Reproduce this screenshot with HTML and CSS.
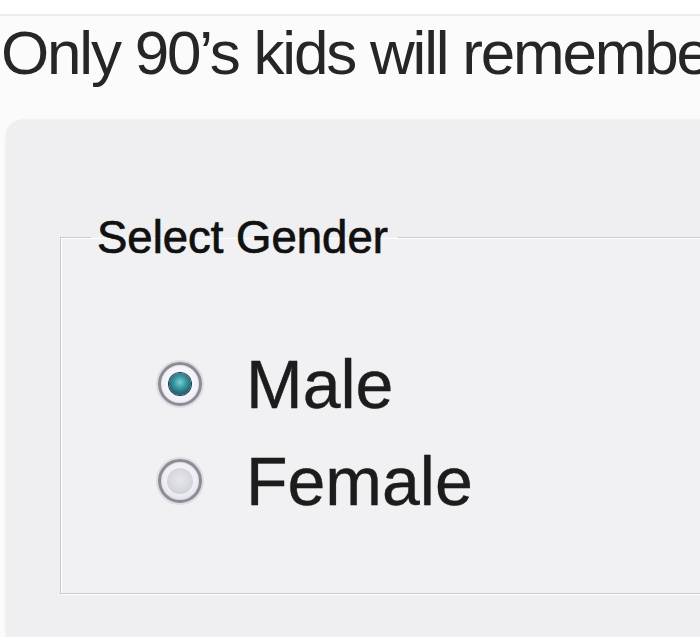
FILE: index.html
```html
<!DOCTYPE html>
<html lang="en">
<head>
<meta charset="utf-8">
<title>Only 90's kids will remember</title>
<link rel="stylesheet" href="styles.css">
</head>
<body>
<div class="page">
  <div class="topbar"></div>
  <h1 class="caption">Only 90’s kids will remember</h1>
  <div class="panel">
    <fieldset class="group">
      <legend class="legend">Select Gender</legend>
      <div class="options">
        <label class="option">
          <span class="radio checked"><span class="dot"></span></span>
          <span class="label-text">Male</span>
        </label>
        <label class="option">
          <span class="radio"><span class="dot"></span></span>
          <span class="label-text">Female</span>
        </label>
      </div>
    </fieldset>
  </div>
</div>
</body>
</html>
```

FILE: styles.css
```css
html, body {
  margin: 0;
  padding: 0;
  background: #fbfbfb;
}

.page {
  width: 700px;
  height: 637px;
  overflow: hidden;
  display: flex;
  flex-direction: column;
}

.topbar {
  height: 14px;
  background: #ffffff;
  border-bottom: 2px solid #ececec;
  flex: none;
}

.caption {
  margin: 6px 0 0 1px;
  font-family: "Liberation Sans", Arial, sans-serif;
  font-weight: normal;
  font-size: 62px;
  line-height: 1;
  letter-spacing: -2.2px;
  color: #262626;
  white-space: nowrap;
  flex: none;
}

.panel {
  margin: 36px 0 0 6px;
  width: 820px;
  flex: 1;
  background: #efeff1;
  border-radius: 18px 0 0 0;
  box-shadow: 0 -1px 2px rgba(0,0,0,0.04), -1px 0 2px rgba(0,0,0,0.04);
  padding: 95px 0 0 54px;
  box-sizing: border-box;
}

.group {
  margin: 0;
  padding: 89px 0 78px 0;
  border: 1px solid #c9c9ce;
  box-shadow: 1px 1px 0 #ffffff, inset 1px 1px 0 #ffffff;
  background: #f1f1f4;
  min-width: 0;
}

.legend {
  margin-left: 30px;
  padding: 0 10px 0 6px;
  font-family: "Liberation Sans", Arial, sans-serif;
  font-size: 45.5px;
  line-height: 1;
  color: #111111;
  -webkit-text-stroke: 0.6px #111111;
  text-shadow: 0 0 1px rgba(0,0,0,0.5);
}

.options {
  display: flex;
  flex-direction: column;
  gap: 29px;
  padding-left: 97px;
}

.option {
  display: flex;
  align-items: center;
  gap: 44px;
}

.label-text {
  font-family: "Liberation Sans", Arial, sans-serif;
  font-size: 68px;
  line-height: 1;
  color: #1c1c1c;
  -webkit-text-stroke: 0.3px #1c1c1c;
  text-shadow: 0 0 1px rgba(0,0,0,0.35);
}

.radio {
  width: 38px;
  height: 38px;
  border-radius: 50%;
  border: 3px solid #8c8c92;
  box-shadow: 0 0 0 2px #dcdce4, inset 0 0 2px rgba(0,0,0,0.15);
  background: radial-gradient(circle at 50% 40%, #fbfbff 0%, #ececf2 60%, #d6d6de 100%);
  display: flex;
  align-items: center;
  justify-content: center;
  flex: none;
}

.radio .dot {
  width: 26px;
  height: 26px;
  border-radius: 50%;
  background: radial-gradient(circle at 50% 45%, #e6e6ec 0%, #d6d6de 60%, #c0c0c9 100%);
}

.radio.checked {
  background: radial-gradient(circle at 50% 45%, #ffffff 0%, #f0f0f8 70%, #d8d8e2 100%);
}

.radio.checked .dot {
  width: 22px;
  height: 22px;
  background: radial-gradient(circle at 50% 42%, #7cd0d4 0%, #3b98a2 35%, #1c5a66 75%, #0e3440 100%);
  box-shadow: 0 0 0 1px #2a3e48;
}
```
